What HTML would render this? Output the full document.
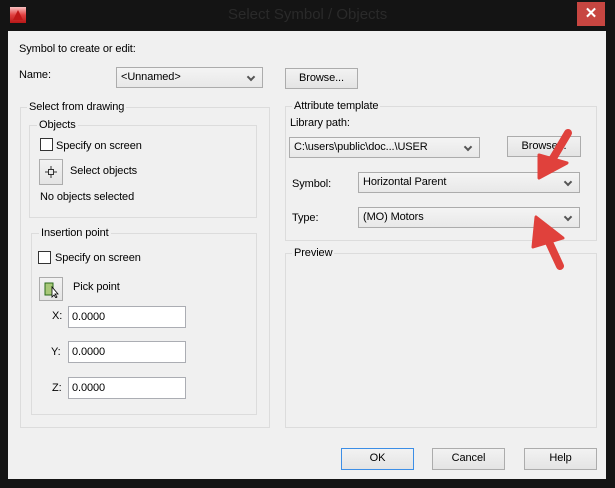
<!DOCTYPE html>
<html><head><meta charset="utf-8"><style>
*{box-sizing:border-box;margin:0;padding:0}
body{width:615px;height:488px;background:#141414;position:relative;overflow:hidden;font-family:"Liberation Sans",sans-serif;font-size:11px;letter-spacing:-0.1px;color:#000}
.a{position:absolute}
.t{position:absolute;white-space:nowrap;line-height:14px}
.client{position:absolute;left:8px;top:31px;width:598px;height:448px;background:#f0f0f0}
.grp{position:absolute;border:1px solid #dcdcdc}
.lab{position:absolute;background:#f0f0f0;padding:0 2px;line-height:14px;top:-8px;white-space:nowrap}
.dd{position:absolute;border:1px solid #acacac;background:linear-gradient(#f4f4f4,#e8e8e8);padding-left:4px;line-height:18px;white-space:nowrap}
.dd:after{content:"";position:absolute;right:8px;top:6px;width:4px;height:4px;border-right:2px solid #555;border-bottom:2px solid #555;transform:rotate(45deg)}
.btn{position:absolute;border:1px solid #acacac;background:linear-gradient(#f2f2f2,#e4e4e4);text-align:center;line-height:19px}
.cb{position:absolute;width:13px;height:13px;border:1px solid #333;background:#fff}
.inp{position:absolute;width:118px;height:22px;border:1px solid #abadb3;background:#fff;padding-left:3px;line-height:20px;color:#000}
</style></head><body>
<div class="a" style="left:10px;top:7px;width:16px;height:16px;background:linear-gradient(#f8c0c0,#e04040 50%,#b81818)"></div>
<svg class="a" style="left:10px;top:7px" width="16" height="16"><polygon points="8,3 13,13 3,13" fill="#c01818"/></svg>
<div class="t" style="left:228px;top:8px;font-size:15px;letter-spacing:0;color:#2a2a2a">Select Symbol / Objects</div>
<div class="a" style="left:577px;top:2px;width:28px;height:24px;background:#c74641;color:#fff;text-align:center;font-size:15px;line-height:24px;font-weight:bold">✕</div>
<div class="client"></div>
<div class="t" style="left:19px;top:42px">Symbol to create or edit:</div>
<div class="t" style="left:19px;top:68px">Name:</div>
<div class="dd" style="left:116px;top:67px;width:147px;height:21px">&lt;Unnamed&gt;</div>
<div class="btn" style="left:285px;top:68px;width:73px;height:21px">Browse...</div>

<div class="grp" style="left:20px;top:107px;width:250px;height:321px"><div class="lab" style="left:6px">Select from drawing</div></div>
<div class="grp" style="left:29px;top:125px;width:228px;height:93px"><div class="lab" style="left:7px">Objects</div></div>
<div class="cb" style="left:40px;top:138px"></div>
<div class="t" style="left:56px;top:139px">Specify on screen</div>
<div class="btn" style="left:39px;top:159px;width:24px;height:26px"></div>
<svg class="a" style="left:43px;top:164px" width="16" height="16"><path d="M8 2V14M2 8H14" stroke="#333" stroke-width="1"/><rect x="5.5" y="5.5" width="5" height="5" fill="#e8e8e8" stroke="#333"/></svg>
<div class="t" style="left:70px;top:164px">Select objects</div>
<div class="t" style="left:40px;top:190px">No objects selected</div>

<div class="grp" style="left:31px;top:233px;width:226px;height:182px"><div class="lab" style="left:7px">Insertion point</div></div>
<div class="cb" style="left:38px;top:251px"></div>
<div class="t" style="left:55px;top:251px">Specify on screen</div>
<div class="btn" style="left:39px;top:277px;width:24px;height:24px"></div>
<svg class="a" style="left:44px;top:282px" width="16" height="16"><rect x="1" y="1" width="8" height="12" fill="#a8c878" stroke="#2a6a1a"/><path d="M8 5L8 15L10 13L12 16L13 15L11 12L14 12Z" fill="#fff" stroke="#000" stroke-width=".8"/></svg>
<div class="t" style="left:73px;top:280px">Pick point</div>
<div class="t" style="left:52px;top:309px">X:</div><div class="inp" style="left:68px;top:306px">0.0000</div>
<div class="t" style="left:51px;top:345px">Y:</div><div class="inp" style="left:68px;top:341px">0.0000</div>
<div class="t" style="left:52px;top:381px">Z:</div><div class="inp" style="left:68px;top:377px">0.0000</div>

<div class="grp" style="left:285px;top:106px;width:312px;height:135px"><div class="lab" style="left:6px">Attribute template</div></div>
<div class="t" style="left:290px;top:116px">Library path:</div>
<div class="dd" style="left:289px;top:137px;width:191px;height:21px">C:\users\public\doc...\USER</div>
<div class="btn" style="left:507px;top:136px;width:74px;height:21px">Browse...</div>
<div class="t" style="left:292px;top:177px">Symbol:</div>
<div class="dd" style="left:358px;top:172px;width:222px;height:21px">Horizontal Parent</div>
<div class="t" style="left:292px;top:211px">Type:</div>
<div class="dd" style="left:358px;top:207px;width:222px;height:21px">(MO) Motors</div>

<div class="grp" style="left:285px;top:253px;width:312px;height:175px"><div class="lab" style="left:6px">Preview</div></div>

<div class="btn" style="left:341px;top:448px;width:73px;height:22px;border-color:#3c8ee6">OK</div>
<div class="btn" style="left:432px;top:448px;width:73px;height:22px">Cancel</div>
<div class="btn" style="left:524px;top:448px;width:73px;height:22px">Help</div>

<svg class="a" style="left:0;top:0" width="615" height="488">
<g fill="#e0413c" stroke="#e0413c" stroke-linejoin="round">
<path d="M568 133L552 160" stroke-width="8" stroke-linecap="round"/>
<polygon points="539,178 539,155 567,163" stroke-width="3"/>
<path d="M560 266L548 240" stroke-width="8" stroke-linecap="round"/>
<polygon points="536,217 533,247 563,238" stroke-width="3"/>
</g></svg>
</body></html>
